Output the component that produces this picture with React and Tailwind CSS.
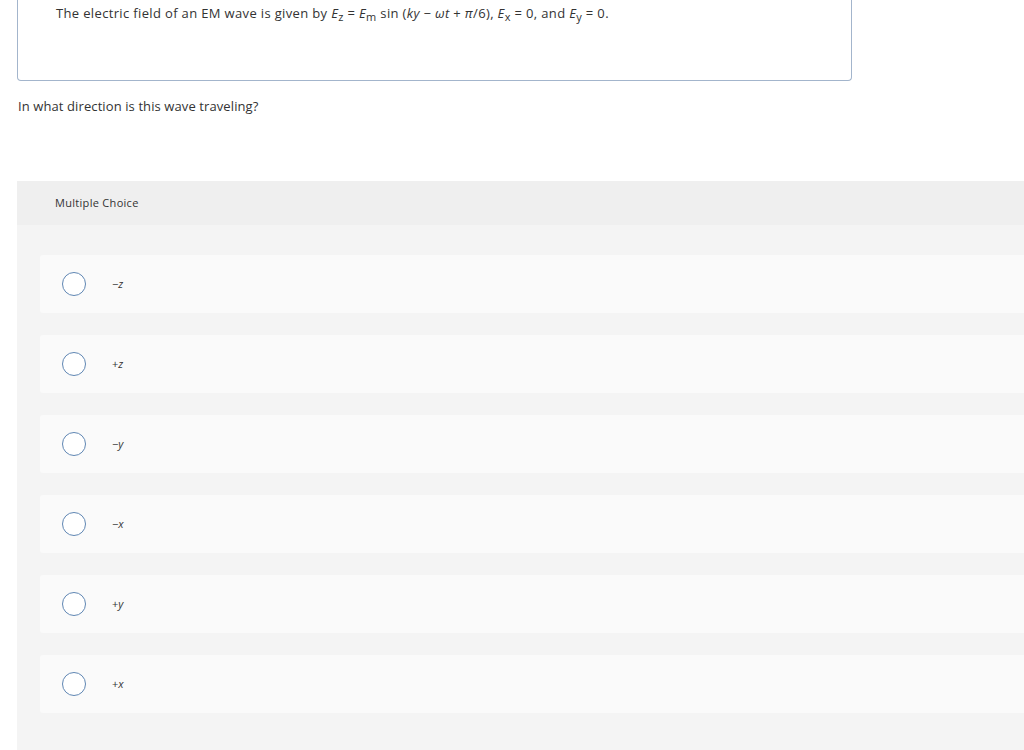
const options = [
  { sign: '−', axis: 'z' },
  { sign: '+', axis: 'z' },
  { sign: '−', axis: 'y' },
  { sign: '−', axis: 'x' },
  { sign: '+', axis: 'y' },
  { sign: '+', axis: 'x' },
]

export default function App() {
  return (
    <div className="min-h-[750px] bg-white text-[#333]" style={{ fontFamily: '"Open Sans", "Liberation Sans", sans-serif' }}>
      {/* Question stem box */}
      <div className="ml-[17px] w-[835px] h-[81px] border-x border-b border-[#a3b5cc] rounded-b-[4px] pl-[38px] pt-[5px]">
        <p className="text-[13px] leading-[17px] tracking-[0.35px]">
          The electric field of an EM wave is given by <i>E</i><sub className="text-[11px]">z</sub> = <i>E</i>
          <sub className="text-[11px]">m</sub> sin (<i>ky</i> − <i>ωt</i> + <i>π</i>/6), <i>E</i>
          <sub className="text-[11px]">x</sub> = 0, and <i>E</i><sub className="text-[11px]">y</sub> = 0.
        </p>
      </div>

      <p className="ml-[18px] mt-[17px] text-[13px] leading-[17px] tracking-[0.1px]">In what direction is this wave traveling?</p>

      {/* Answer panel */}
      <div className="ml-[17px] mt-[66px] bg-[#f4f4f4] pb-[40px]">
        <div className="h-[44px] bg-[#efefef] flex items-center pl-[38px] text-[11px] tracking-[0.3px]">Multiple Choice</div>
        <div className="pl-[23px] pt-[30px] flex flex-col gap-[22px]">
          {options.map((o, i) => (
            <div key={i} className="h-[58px] bg-[#fafafa] rounded-l-[3px] flex items-center">
              <span className="ml-[22px] w-[24px] h-[24px] rounded-full border border-[#5f86b3] bg-white" />
              <span className="ml-[26px] text-[11px]">
                {o.sign}
                <i>{o.axis}</i>
              </span>
            </div>
          ))}
        </div>
      </div>
    </div>
  )
}
